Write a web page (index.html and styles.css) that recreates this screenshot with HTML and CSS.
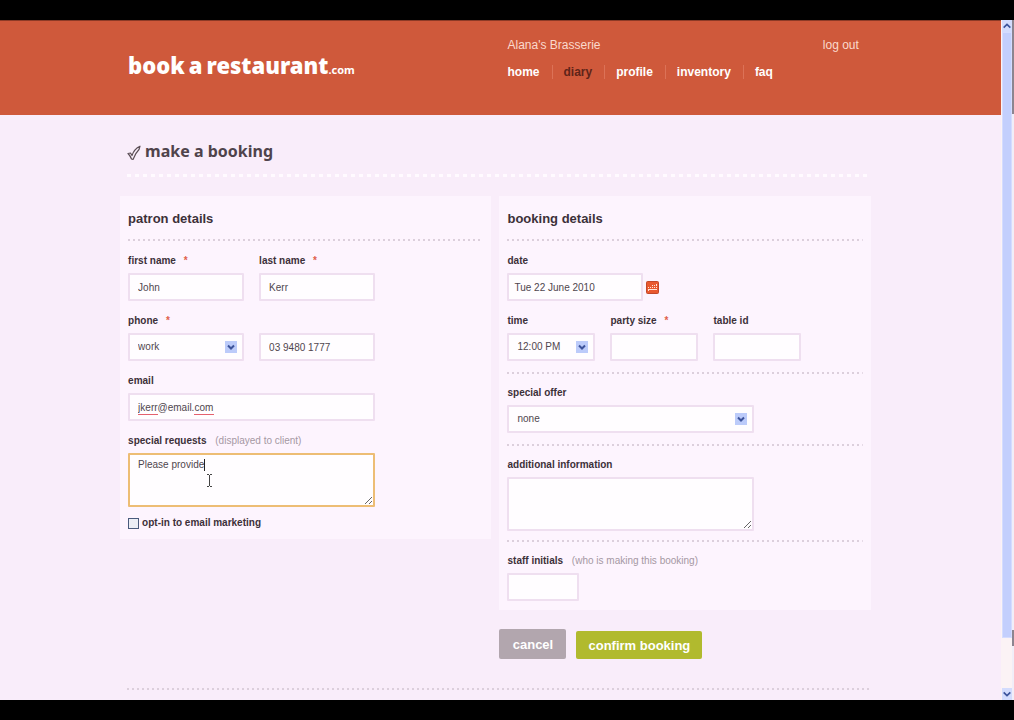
FILE: index.html
```html
<!DOCTYPE html>
<html lang="en">
<head>
    <meta charset="UTF-8">
    <meta name="viewport" content="width=device-width, initial-scale=1.0">
    <title>Make a booking - bookarestaurant.com</title>
    <link rel="stylesheet" href="styles.css">
</head>
<body>
    <div class="window">
        <div class="page">
            <header class="header">
                <div class="container header-row">
                    <a class="logo" href="#"><span>book</span><span>a</span><span>restaurant</span><small>.com</small></a>
                    <div class="header-right">
                        <div class="account">
                            <span>Alana's Brasserie</span>
                            <a href="#">log out</a>
                        </div>
                        <nav class="nav">
                            <a href="#">home</a>
                            <a class="current" href="#">diary</a>
                            <a href="#">profile</a>
                            <a href="#">inventory</a>
                            <a href="#">faq</a>
                        </nav>
                    </div>
                </div>
            </header>

            <main class="container">
                <h1 class="title">
                    <svg width="14" height="16" viewBox="0 0 14 16" fill="none" stroke="#5b4e55" stroke-width="1.2" stroke-linejoin="round">
                        <path d="M1 8.500L3.500 8L5 10.500C6.500 6 9 3 13 1.200L12 4.500C9 7.500 7.500 10.500 6 14.500L4.500 14C3.800 12 2.500 10 1 8.500Z"/>
                    </svg>
                    make a booking
                </h1>

                <form class="columns">
                    <section class="panel">
                        <h2>patron details</h2>
                        <div class="row">
                            <div class="field name">
                                <label for="first_name">first name <span class="req">*</span></label>
                                <input type="text" id="first_name" value="John">
                            </div>
                            <div class="field name">
                                <label for="last_name">last name <span class="req">*</span></label>
                                <input type="text" id="last_name" value="Kerr">
                            </div>
                        </div>
                        <div class="row">
                            <div class="field name">
                                <label for="phone_type">phone <span class="req">*</span></label>
                                <div class="select">
                                    <select id="phone_type">
                                        <option>work</option>
                                        <option>home</option>
                                        <option>mobile</option>
                                    </select>
                                    <svg class="arrow" viewBox="0 0 12 12"><path d="M3 4.5l3 3 3-3"/></svg>
                                </div>
                            </div>
                            <div class="field name">
                                <input type="text" id="phone" aria-label="phone number" value="03 9480 1777">
                            </div>
                        </div>
                        <div class="field wide">
                            <label for="email">email</label>
                            <div class="spelled">
                                <input type="text" id="email" spellcheck="false" value="jkerr@email.com">
                                <span class="misspelt user"></span>
                                <span class="misspelt domain"></span>
                            </div>
                        </div>
                        <div class="field wide">
                            <label for="requests">special requests <span class="hint">(displayed to client)</span></label>
                            <div class="typing">
                                <textarea class="active" id="requests" spellcheck="false">Please provide</textarea>
                                <span class="caret"></span>
                                <svg class="pointer" width="7" height="13" viewBox="0 0 7 13" fill="none" stroke="#444">
                                    <path d="M1 0.5h2M4 0.5h2M3.5 1v11M1 12.5h2M4 12.5h2"/>
                                </svg>
                            </div>
                        </div>
                        <label class="check" for="optin"><input type="checkbox" id="optin"> opt-in to email marketing</label>
                    </section>

                    <div class="booking">
                        <section class="panel">
                            <h2>booking details</h2>
                            <div class="field">
                                <label for="date">date</label>
                                <div class="date">
                                    <input type="text" id="date" value="Tue 22 June 2010">
                                    <button class="calendar" type="button" aria-label="pick a date">
                                        <svg width="13" height="13" viewBox="0 0 13 13">
                                            <rect x="0.5" y="0.5" width="12" height="12" rx="1" fill="#e9592f" stroke="#c2482a"/>
                                            <path d="M2 6h1v1h-1zM4 6h1v1h-1zM6 4h1v1h-1zM8 4h1v1h-1zM10 3h1v2h-1zM6 6h1v1h-1zM8 6h1v1h-1zM10 6h1v1h-1zM2 8h9v1h-8v1h-1z" fill="#ffe3d6"/>
                                        </svg>
                                    </button>
                                </div>
                            </div>
                            <div class="row">
                                <div class="field small">
                                    <label for="time">time</label>
                                    <div class="select">
                                        <select id="time">
                                            <option>12:00 PM</option>
                                            <option>12:30 PM</option>
                                        </select>
                                        <svg class="arrow" viewBox="0 0 12 12"><path d="M3 4.5l3 3 3-3"/></svg>
                                    </div>
                                </div>
                                <div class="field small">
                                    <label for="party">party size <span class="req">*</span></label>
                                    <input type="text" id="party">
                                </div>
                                <div class="field small">
                                    <label for="table">table id</label>
                                    <input type="text" id="table">
                                </div>
                            </div>
                            <div class="group">
                                <div class="field wide">
                                    <label for="offer">special offer</label>
                                    <div class="select">
                                        <select id="offer">
                                            <option>none</option>
                                        </select>
                                        <svg class="arrow" viewBox="0 0 12 12"><path d="M3 4.5l3 3 3-3"/></svg>
                                    </div>
                                </div>
                            </div>
                            <div class="group">
                                <div class="field wide">
                                    <label for="info">additional information</label>
                                    <textarea id="info"></textarea>
                                </div>
                            </div>
                            <div class="group">
                                <div class="field initials">
                                    <label for="initials">staff initials <span class="hint">(who is making this booking)</span></label>
                                    <input type="text" id="initials">
                                </div>
                            </div>
                        </section>
                        <div class="actions">
                            <button class="cancel" type="button">cancel</button>
                            <button class="confirm" type="submit">confirm booking</button>
                        </div>
                    </div>
                </form>
                <div class="footer-line"></div>
            </main>
        </div>

        <div class="scrollbar">
            <div class="track">
                <svg class="arrow" viewBox="0 0 12 12"><path d="M2 8l4-4 4 4"/></svg>
                <div class="thumb"></div>
                <svg class="arrow" viewBox="0 0 12 12"><path d="M2 4l4 4 4-4"/></svg>
            </div>
            <div class="edge"></div>
        </div>
    </div>
</body>
</html>
```

FILE: styles.css
```css
* {
    box-sizing: border-box;
}
body {
    margin: 0;
    padding: 20px 0;
    min-height: 100vh;
    display: flex;
    background: #000;
    color: #3c3039;
    font-family: "Liberation Sans", Arial, sans-serif;
    font-size: 10px;
    line-height: 14px;
}
a {
    color: inherit;
    text-decoration: none;
}
.window {
    flex: 1;
    display: flex;
}
.page {
    flex: 1;
    background: #f9edfa;
}
.container {
    width: 75%;
    margin-left: 12%;
}

/* header */
.header {
    background: #cf593b;
    border-top: 1px solid #8d3a26;
    height: 95px;
}
.header-row {
    display: grid;
    grid-template-columns: 1fr 1fr;
    gap: 8px;
}
.logo {
    display: flex;
    align-items: baseline;
    gap: 4px;
    padding: 29px 0 0 8px;
    color: #fff;
    font-family: "Noto Sans", sans-serif;
    font-weight: 900;
    font-size: 22px;
    line-height: 30px;
}
.logo small {
    margin-left: -4px;
    font-size: 11px;
    font-weight: 700;
}
.header-right {
    padding: 16px 12px 0 8px;
}
.account {
    display: flex;
    justify-content: space-between;
    color: #fbd9cd;
    font-size: 12px;
    line-height: 16px;
}
.nav {
    display: flex;
    margin-top: 12px;
    color: #fff;
    font-size: 12px;
    font-weight: bold;
    line-height: 14px;
}
.nav a + a {
    margin-left: 12px;
    padding-left: 11px;
    border-left: 1px solid #dc7257;
}
.nav .current {
    color: #5e2419;
}

/* title */
.title {
    display: flex;
    align-items: center;
    gap: 4px;
    margin: 0 0 19px 7px;
    padding: 25px 0 15px;
    color: #4f434b;
    font-family: "Noto Sans", sans-serif;
    font-size: 16px;
    line-height: 22px;
    background: repeating-linear-gradient(90deg, #fffaff 0 4px, transparent 4px 8px) bottom / 100% 3px no-repeat;
}
.title svg {
    margin-top: 3px;
}

/* form */
.columns {
    display: grid;
    grid-template-columns: 1fr 1fr;
    align-items: start;
    gap: 8px;
}
.panel {
    display: flex;
    flex-direction: column;
    gap: 13px;
    padding: 14px 8px 9px;
    background: #fdf4fe;
}
h2 {
    margin: 0;
    padding-bottom: 13px;
    font-size: 13px;
    line-height: 18px;
}
h2,
.group,
.footer-line {
    background: repeating-linear-gradient(90deg, #dccfdc 0 2px, transparent 2px 5px) bottom / 100% 2px no-repeat;
}
.row {
    display: flex;
    align-items: flex-end;
    gap: 15px;
}
.group {
    margin-top: -2px;
    padding-top: 14px;
    background-position: top;
}
.group:last-child {
    margin-top: -4px;
}
.field {
    display: flex;
    flex-direction: column;
    gap: 5px;
}
.name {
    width: 116px;
}
.small {
    width: 88px;
}
.wide {
    width: 247px;
}
.initials {
    width: 72px;
}
label {
    font-weight: bold;
    white-space: nowrap;
}
.req {
    margin-left: 5px;
    color: #e0604a;
}
.hint {
    margin-left: 6px;
    color: #a598a3;
    font-weight: normal;
}
input[type="text"],
select,
textarea {
    display: block;
    width: 100%;
    height: 28px;
    margin: 0;
    padding: 0 8px;
    border: 2px solid #efdff0;
    border-radius: 1px;
    background: #fffdff;
    color: #50464e;
    font-family: inherit;
    font-size: 10px;
    line-height: 14px;
    outline: none;
}
select {
    appearance: none;
}
textarea {
    height: 54px;
    padding: 3px 8px;
}
textarea.active {
    border-color: #edbd75;
}
.select,
.spelled,
.typing {
    position: relative;
}
.arrow {
    width: 12px;
    height: 12px;
    background: #bccbfa;
    fill: none;
    stroke: #3c539b;
    stroke-width: 2;
}
.select .arrow {
    position: absolute;
    top: 8px;
    right: 7px;
    pointer-events: none;
}
.misspelt {
    position: absolute;
    bottom: 6px;
    height: 1px;
    background: #e4606e;
}
.misspelt.user {
    left: 10px;
    width: 20px;
}
.misspelt.domain {
    left: 66px;
    width: 20px;
}
.caret {
    position: absolute;
    top: 6px;
    left: 76px;
    width: 1px;
    height: 12px;
    background: #222;
}
.pointer {
    position: absolute;
    top: 21px;
    left: 78px;
}
.check {
    display: flex;
    align-items: center;
    gap: 3px;
    margin-top: -4px;
}
.check input {
    appearance: none;
    width: 11px;
    height: 11px;
    margin: 0;
    border: 1px solid #4a5b7c;
    background: #eceef5;
}
.date {
    display: flex;
    align-items: center;
    gap: 3px;
}
.date input[type="text"] {
    width: 136px;
    padding: 0 5px;
}
.calendar {
    display: flex;
    padding: 0;
    border: 0;
    background: none;
}
.actions {
    display: flex;
    align-items: flex-end;
    gap: 10px;
    margin-top: 19px;
}
.actions button {
    height: 28px;
    padding: 0 12px;
    border: 0;
    border-radius: 2px;
    color: #fff;
    font-family: inherit;
    font-size: 13px;
    font-weight: bold;
    cursor: pointer;
}
.actions .cancel {
    height: 30px;
    min-width: 67px;
    background: #b2a6ae;
}
.actions .confirm {
    background: #b1ba2e;
}
.footer-line {
    height: 2px;
    margin: 29px 0 9px 7px;
}

/* window scrollbar */
.scrollbar {
    display: flex;
    width: 13px;
    background: #f3f1fb;
}
.track {
    flex: 1;
    display: flex;
    flex-direction: column;
    padding-left: 1px;
    background: #fbf3f5;
}
.track .arrow {
    width: 10px;
    background: #d3dcfd;
}
.thumb {
    flex: 1;
    margin-bottom: 50px;
    border: 1px solid #d5dcff;
    background: #c3cffd;
}
.edge {
    width: 2px;
    background: linear-gradient(#8c8590 0 94px, #f1eef8 94px 610px, #8c8590 610px 626px, #f1eef8 626px);
}
```
